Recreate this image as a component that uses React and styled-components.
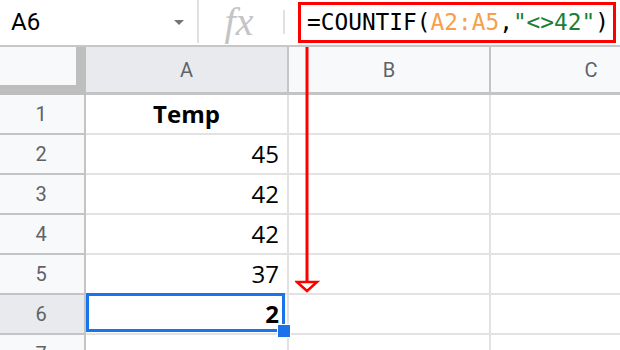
import React from 'react';
import styled, { createGlobalStyle } from 'styled-components';

const GlobalStyle = createGlobalStyle`
  html, body {
    margin: 0;
    padding: 0;
    background: #ffffff;
    overflow: hidden;
  }
  * {
    box-sizing: border-box;
  }
`;

const Page = styled.div`
  position: relative;
  width: 620px;
  height: 350px;
  overflow: hidden;
  font-family: Roboto, "Liberation Sans", sans-serif;
`;

const FormulaBar = styled.div`
  display: flex;
  align-items: center;
  height: 47px;
  border-bottom: 2px solid #c7c7c7;
  padding-bottom: 2px;
`;

const NameBox = styled.div`
  width: 197px;
  height: 100%;
  display: flex;
  align-items: center;
  justify-content: space-between;
  padding: 0 13px 0 11px;
  font-size: 24px;
  color: #000;
`;

const Caret = styled.span`
  width: 0;
  height: 0;
  border-left: 5px solid transparent;
  border-right: 5px solid transparent;
  border-top: 5px solid #757575;
  margin-top: 2px;
`;

const Divider = styled.div`
  width: 2px;
  align-self: ${p => (p.$full ? 'stretch' : 'center')};
  height: ${p => (p.$full ? 'auto' : '24px')};
  background: #e0e0e0;
`;

const FxBox = styled.div`
  width: 84px;
  height: 100%;
  display: flex;
  justify-content: center;
  align-items: center;
  font-family: "Liberation Serif", serif;
  font-style: italic;
  font-size: 40px;
  color: #c4c4c4;
  padding-right: 4px;
  line-height: 45px;
`;

const FormulaBox = styled.div`
  margin-left: 13px;
  width: 318px;
  height: 41px;
  border: 3px solid #ff0000;
  display: flex;
  align-items: center;
  padding-left: 6px;
  font-family: "DejaVu Sans Mono", "Liberation Mono", monospace;
  font-size: 22.8px;
  color: #000;
  white-space: pre;
  margin-top: 1px;
`;

const Token = styled.span`
  color: ${p => p.$color || '#000'};
`;

const Grid = styled.div`
  display: grid;
  grid-template-columns: 86px 203px 202px 202px;
  grid-template-rows: 48px repeat(7, 40px);
`;

const Corner = styled.div`
  background: #bebebe;
  padding: 0 10px 10px 0;
`;

const CornerInner = styled.div`
  width: 100%;
  height: 100%;
  background: #f8f9fa;
`;

const ColHeader = styled.div`
  display: flex;
  align-items: center;
  justify-content: center;
  background: ${p => (p.$active ? '#e8eaed' : '#f8f9fa')};
  border-right: 2px solid #c4c4c4;
  border-bottom: 3px solid #c4c4c4;
  font-size: 20px;
  color: #5f6368;
  padding-top: 1px;
`;

const RowHeader = styled.div`
  display: flex;
  align-items: center;
  justify-content: center;
  background: ${p => (p.$active ? '#e8eaed' : '#f8f9fa')};
  border-right: 2px solid #c4c4c4;
  border-bottom: 2px solid #c4c4c4;
  font-size: 20px;
  color: #5f6368;
  padding-right: 2px;
`;

const Cell = styled.div`
  position: relative;
  z-index: ${p => (p.$selected ? 2 : 'auto')};
  display: flex;
  align-items: center;
  justify-content: ${p => (p.$center ? 'center' : 'flex-end')};
  padding: 0 8px 2px 0;
  padding-left: ${p => (p.$center ? '8px' : '0')};
  border-right: 2px solid #e2e2e2;
  border-bottom: 2px solid #e2e2e2;
  font-family: "Open Sans", "Noto Sans", sans-serif;
  font-size: 24px;
  font-weight: ${p => (p.$bold ? 700 : 400)};
  color: #000;
  background: #fff;
`;

const Selection = styled.div`
  position: absolute;
  left: 0;
  top: -2px;
  right: 2px;
  bottom: 1px;
  border: 3px solid #1a73e8;
  pointer-events: none;
`;

const Handle = styled.div`
  position: absolute;
  right: -9px;
  bottom: -9px;
  width: 14px;
  height: 14px;
  background: #1a73e8;
  border: 1px solid #fff;
`;

const Arrow = styled.svg`
  position: absolute;
  z-index: 3;
  left: 295px;
  top: 47px;
`;

const rows = [
  { n: 1, v: 'Temp', center: true, bold: true },
  { n: 2, v: '45' },
  { n: 3, v: '42' },
  { n: 4, v: '42' },
  { n: 5, v: '37' },
  { n: 6, v: '2', bold: true, selected: true },
  { n: 7, v: '' },
];

export default function App() {
  return (
    <Page>
      <GlobalStyle />
      <FormulaBar>
        <NameBox>
          <span>A6</span>
          <Caret />
        </NameBox>
        <Divider $full />
        <FxBox>fx</FxBox>
        <Divider />
        <FormulaBox>
          <Token>=COUNTIF(</Token>
          <Token $color="#f6a04d">A2:A5</Token>
          <Token>,</Token>
          <Token $color="#188038">"&lt;&gt;42"</Token>
          <Token>)</Token>
        </FormulaBox>
      </FormulaBar>

      <Grid>
        <Corner>
          <CornerInner />
        </Corner>
        <ColHeader $active>A</ColHeader>
        <ColHeader>B</ColHeader>
        <ColHeader>C</ColHeader>

        {rows.map(r => (
          <React.Fragment key={r.n}>
            <RowHeader $active={r.selected}>{r.n}</RowHeader>
            <Cell $center={r.center} $bold={r.bold} $selected={r.selected}>
              {r.v}
              {r.selected && (
                <Selection>
                  <Handle />
                </Selection>
              )}
            </Cell>
            <Cell />
            <Cell />
          </React.Fragment>
        ))}
      </Grid>

      <Arrow width="26" height="248" viewBox="0 0 26 248">
        <line x1="12" y1="0" x2="12" y2="236" stroke="#ff0000" strokeWidth="3" />
        <polygon points="2,235 22,235 12,244" fill="#fff" stroke="#ff0000" strokeWidth="2.5" strokeLinejoin="miter" />
      </Arrow>
    </Page>
  );
}
